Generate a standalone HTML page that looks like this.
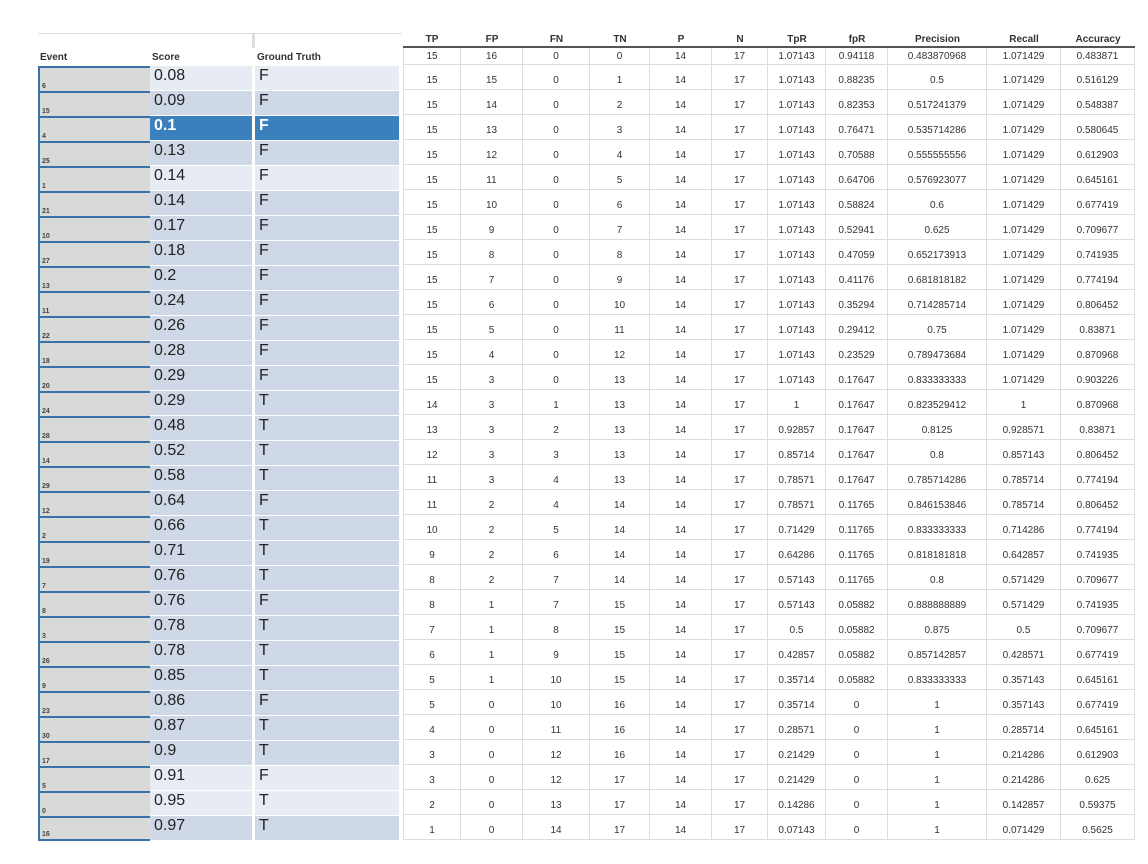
<!DOCTYPE html>
<html><head><meta charset="utf-8"><style>
body{margin:0;width:1148px;height:864px;background:#fff;font-family:"Liberation Sans",sans-serif;position:relative;overflow:hidden}
table{border-collapse:separate;border-spacing:0;position:absolute;table-layout:fixed}
td{box-sizing:border-box}
#L{left:38px;top:33px}
#L td{padding:0;height:25px;vertical-align:top}
#L .h td{height:15px;background:#fff;border-top:1px solid #ddd}
#L .h2 td{height:18px;font-size:10px;font-weight:bold;color:#333;vertical-align:middle;padding-left:2px}
#L td.e{background:#d9d9d9;border-top:2px solid #3a72a8;border-left:2px solid #3a72a8;font-size:7px;font-weight:bold;color:#444;vertical-align:bottom;padding:0 0 1px 2px}
#L td.s,#L td.g{font-size:16px;line-height:20px;color:#222;padding-left:4px;background:#cfd8e6;border-right:3px solid #fff;border-bottom:1px solid #fff}
#L tr.l td.s,#L tr.l td.g{background:#e7ecf4}
#L tr.sel td.s,#L tr.sel td.g{background:#3a80bd;color:#fff;font-weight:bold}
#R{left:403px;top:33px;font-size:10px;color:#333;text-align:center}
#R td{padding:0 0 3px 0;border-right:1px solid #ddd;border-bottom:1px solid #ddd;height:25px;vertical-align:bottom}
#R tr.h td{height:15px;font-weight:bold;border:none;border-bottom:2px solid #555;padding:0;vertical-align:middle}
#R tr.f td{height:17px;vertical-align:middle;padding:0}
#R td:first-child{border-left:1px solid #ddd}
#R tr.h td:first-child{border-left:none}
</style></head><body>
<table id="L"><colgroup><col style="width:112px"><col style="width:105px"><col style="width:147px"></colgroup>
<tr class="h"><td colspan="2" style="border-right:3px solid #ddd"></td><td></td></tr>
<tr class="h2"><td style="padding-left:2px">Event</td><td>Score</td><td>Ground Truth</td></tr>
<tr class="l"><td class="e">6</td><td class="s">0.08</td><td class="g">F</td></tr>
<tr><td class="e">15</td><td class="s">0.09</td><td class="g">F</td></tr>
<tr class="sel"><td class="e">4</td><td class="s">0.1</td><td class="g">F</td></tr>
<tr><td class="e">25</td><td class="s">0.13</td><td class="g">F</td></tr>
<tr class="l"><td class="e">1</td><td class="s">0.14</td><td class="g">F</td></tr>
<tr><td class="e">21</td><td class="s">0.14</td><td class="g">F</td></tr>
<tr><td class="e">10</td><td class="s">0.17</td><td class="g">F</td></tr>
<tr><td class="e">27</td><td class="s">0.18</td><td class="g">F</td></tr>
<tr><td class="e">13</td><td class="s">0.2</td><td class="g">F</td></tr>
<tr><td class="e">11</td><td class="s">0.24</td><td class="g">F</td></tr>
<tr><td class="e">22</td><td class="s">0.26</td><td class="g">F</td></tr>
<tr><td class="e">18</td><td class="s">0.28</td><td class="g">F</td></tr>
<tr><td class="e">20</td><td class="s">0.29</td><td class="g">F</td></tr>
<tr><td class="e">24</td><td class="s">0.29</td><td class="g">T</td></tr>
<tr><td class="e">28</td><td class="s">0.48</td><td class="g">T</td></tr>
<tr><td class="e">14</td><td class="s">0.52</td><td class="g">T</td></tr>
<tr><td class="e">29</td><td class="s">0.58</td><td class="g">T</td></tr>
<tr><td class="e">12</td><td class="s">0.64</td><td class="g">F</td></tr>
<tr><td class="e">2</td><td class="s">0.66</td><td class="g">T</td></tr>
<tr><td class="e">19</td><td class="s">0.71</td><td class="g">T</td></tr>
<tr><td class="e">7</td><td class="s">0.76</td><td class="g">T</td></tr>
<tr><td class="e">8</td><td class="s">0.76</td><td class="g">F</td></tr>
<tr><td class="e">3</td><td class="s">0.78</td><td class="g">T</td></tr>
<tr><td class="e">26</td><td class="s">0.78</td><td class="g">T</td></tr>
<tr><td class="e">9</td><td class="s">0.85</td><td class="g">T</td></tr>
<tr><td class="e">23</td><td class="s">0.86</td><td class="g">F</td></tr>
<tr><td class="e">30</td><td class="s">0.87</td><td class="g">T</td></tr>
<tr><td class="e">17</td><td class="s">0.9</td><td class="g">T</td></tr>
<tr class="l"><td class="e">5</td><td class="s">0.91</td><td class="g">F</td></tr>
<tr class="l"><td class="e">0</td><td class="s">0.95</td><td class="g">T</td></tr>
<tr><td class="e" style="border-bottom:2px solid #3a72a8">16</td><td class="s">0.97</td><td class="g">T</td></tr>
</table>
<table id="R"><colgroup><col style="width:58px"><col style="width:62px"><col style="width:67px"><col style="width:60px"><col style="width:62px"><col style="width:56px"><col style="width:58px"><col style="width:62px"><col style="width:99px"><col style="width:74px"><col style="width:74px"></colgroup>
<tr class="h"><td>TP</td><td>FP</td><td>FN</td><td>TN</td><td>P</td><td>N</td><td>TpR</td><td>fpR</td><td>Precision</td><td>Recall</td><td>Accuracy</td></tr>
<tr class="f"><td>15</td><td>16</td><td>0</td><td>0</td><td>14</td><td>17</td><td>1.07143</td><td>0.94118</td><td>0.483870968</td><td>1.071429</td><td>0.483871</td></tr>
<tr><td>15</td><td>15</td><td>0</td><td>1</td><td>14</td><td>17</td><td>1.07143</td><td>0.88235</td><td>0.5</td><td>1.071429</td><td>0.516129</td></tr>
<tr><td>15</td><td>14</td><td>0</td><td>2</td><td>14</td><td>17</td><td>1.07143</td><td>0.82353</td><td>0.517241379</td><td>1.071429</td><td>0.548387</td></tr>
<tr><td>15</td><td>13</td><td>0</td><td>3</td><td>14</td><td>17</td><td>1.07143</td><td>0.76471</td><td>0.535714286</td><td>1.071429</td><td>0.580645</td></tr>
<tr><td>15</td><td>12</td><td>0</td><td>4</td><td>14</td><td>17</td><td>1.07143</td><td>0.70588</td><td>0.555555556</td><td>1.071429</td><td>0.612903</td></tr>
<tr><td>15</td><td>11</td><td>0</td><td>5</td><td>14</td><td>17</td><td>1.07143</td><td>0.64706</td><td>0.576923077</td><td>1.071429</td><td>0.645161</td></tr>
<tr><td>15</td><td>10</td><td>0</td><td>6</td><td>14</td><td>17</td><td>1.07143</td><td>0.58824</td><td>0.6</td><td>1.071429</td><td>0.677419</td></tr>
<tr><td>15</td><td>9</td><td>0</td><td>7</td><td>14</td><td>17</td><td>1.07143</td><td>0.52941</td><td>0.625</td><td>1.071429</td><td>0.709677</td></tr>
<tr><td>15</td><td>8</td><td>0</td><td>8</td><td>14</td><td>17</td><td>1.07143</td><td>0.47059</td><td>0.652173913</td><td>1.071429</td><td>0.741935</td></tr>
<tr><td>15</td><td>7</td><td>0</td><td>9</td><td>14</td><td>17</td><td>1.07143</td><td>0.41176</td><td>0.681818182</td><td>1.071429</td><td>0.774194</td></tr>
<tr><td>15</td><td>6</td><td>0</td><td>10</td><td>14</td><td>17</td><td>1.07143</td><td>0.35294</td><td>0.714285714</td><td>1.071429</td><td>0.806452</td></tr>
<tr><td>15</td><td>5</td><td>0</td><td>11</td><td>14</td><td>17</td><td>1.07143</td><td>0.29412</td><td>0.75</td><td>1.071429</td><td>0.83871</td></tr>
<tr><td>15</td><td>4</td><td>0</td><td>12</td><td>14</td><td>17</td><td>1.07143</td><td>0.23529</td><td>0.789473684</td><td>1.071429</td><td>0.870968</td></tr>
<tr><td>15</td><td>3</td><td>0</td><td>13</td><td>14</td><td>17</td><td>1.07143</td><td>0.17647</td><td>0.833333333</td><td>1.071429</td><td>0.903226</td></tr>
<tr><td>14</td><td>3</td><td>1</td><td>13</td><td>14</td><td>17</td><td>1</td><td>0.17647</td><td>0.823529412</td><td>1</td><td>0.870968</td></tr>
<tr><td>13</td><td>3</td><td>2</td><td>13</td><td>14</td><td>17</td><td>0.92857</td><td>0.17647</td><td>0.8125</td><td>0.928571</td><td>0.83871</td></tr>
<tr><td>12</td><td>3</td><td>3</td><td>13</td><td>14</td><td>17</td><td>0.85714</td><td>0.17647</td><td>0.8</td><td>0.857143</td><td>0.806452</td></tr>
<tr><td>11</td><td>3</td><td>4</td><td>13</td><td>14</td><td>17</td><td>0.78571</td><td>0.17647</td><td>0.785714286</td><td>0.785714</td><td>0.774194</td></tr>
<tr><td>11</td><td>2</td><td>4</td><td>14</td><td>14</td><td>17</td><td>0.78571</td><td>0.11765</td><td>0.846153846</td><td>0.785714</td><td>0.806452</td></tr>
<tr><td>10</td><td>2</td><td>5</td><td>14</td><td>14</td><td>17</td><td>0.71429</td><td>0.11765</td><td>0.833333333</td><td>0.714286</td><td>0.774194</td></tr>
<tr><td>9</td><td>2</td><td>6</td><td>14</td><td>14</td><td>17</td><td>0.64286</td><td>0.11765</td><td>0.818181818</td><td>0.642857</td><td>0.741935</td></tr>
<tr><td>8</td><td>2</td><td>7</td><td>14</td><td>14</td><td>17</td><td>0.57143</td><td>0.11765</td><td>0.8</td><td>0.571429</td><td>0.709677</td></tr>
<tr><td>8</td><td>1</td><td>7</td><td>15</td><td>14</td><td>17</td><td>0.57143</td><td>0.05882</td><td>0.888888889</td><td>0.571429</td><td>0.741935</td></tr>
<tr><td>7</td><td>1</td><td>8</td><td>15</td><td>14</td><td>17</td><td>0.5</td><td>0.05882</td><td>0.875</td><td>0.5</td><td>0.709677</td></tr>
<tr><td>6</td><td>1</td><td>9</td><td>15</td><td>14</td><td>17</td><td>0.42857</td><td>0.05882</td><td>0.857142857</td><td>0.428571</td><td>0.677419</td></tr>
<tr><td>5</td><td>1</td><td>10</td><td>15</td><td>14</td><td>17</td><td>0.35714</td><td>0.05882</td><td>0.833333333</td><td>0.357143</td><td>0.645161</td></tr>
<tr><td>5</td><td>0</td><td>10</td><td>16</td><td>14</td><td>17</td><td>0.35714</td><td>0</td><td>1</td><td>0.357143</td><td>0.677419</td></tr>
<tr><td>4</td><td>0</td><td>11</td><td>16</td><td>14</td><td>17</td><td>0.28571</td><td>0</td><td>1</td><td>0.285714</td><td>0.645161</td></tr>
<tr><td>3</td><td>0</td><td>12</td><td>16</td><td>14</td><td>17</td><td>0.21429</td><td>0</td><td>1</td><td>0.214286</td><td>0.612903</td></tr>
<tr><td>3</td><td>0</td><td>12</td><td>17</td><td>14</td><td>17</td><td>0.21429</td><td>0</td><td>1</td><td>0.214286</td><td>0.625</td></tr>
<tr><td>2</td><td>0</td><td>13</td><td>17</td><td>14</td><td>17</td><td>0.14286</td><td>0</td><td>1</td><td>0.142857</td><td>0.59375</td></tr>
<tr><td>1</td><td>0</td><td>14</td><td>17</td><td>14</td><td>17</td><td>0.07143</td><td>0</td><td>1</td><td>0.071429</td><td>0.5625</td></tr>
</table>
</body></html>
